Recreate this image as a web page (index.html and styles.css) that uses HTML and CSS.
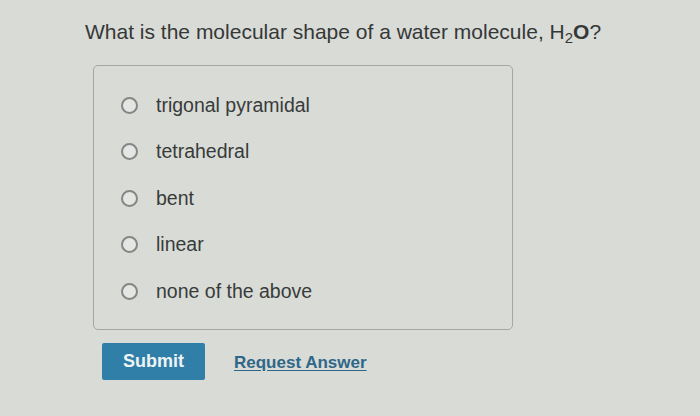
FILE: index.html
```html
<!DOCTYPE html>
<html>
<head>
<meta charset="utf-8">
<link rel="stylesheet" href="styles.css">
</head>
<body>
<div class="page">
  <h1 class="question">What is the molecular shape of a water molecule, H<sub class="sub">2</sub><b class="oxy">O</b>?</h1>
  <div class="choices">
    <label class="choice"><span class="radio"></span><span class="label">trigonal pyramidal</span></label>
    <label class="choice"><span class="radio"></span><span class="label">tetrahedral</span></label>
    <label class="choice"><span class="radio"></span><span class="label">bent</span></label>
    <label class="choice"><span class="radio"></span><span class="label">linear</span></label>
    <label class="choice"><span class="radio"></span><span class="label">none of the above</span></label>
  </div>
  <div class="actions">
    <button class="submit">Submit</button>
    <a class="request" href="#">Request Answer</a>
  </div>
</div>
</body>
</html>
```
FILE: styles.css
```css
html, body {
  margin: 0;
  padding: 0;
  background: #d9dbd7;
  height: 100%;
}
body {
  font-family: "Liberation Sans", Arial, sans-serif;
  color: #353837;
}
.page {
  padding: 19px 0 0 85px;
}
.question {
  margin: 0;
  font-size: 21px;
  font-weight: normal;
  line-height: 26px;
  color: #353837;
}
.sub {
  font-size: 15px;
  vertical-align: -4px;
  line-height: 0;
}
.oxy {
  font-weight: bold;
}
.choices {
  margin: 20px 0 0 8px;
  width: 420px;
  height: 265px;
  box-sizing: border-box;
  border: 1px solid #a3a6a3;
  border-radius: 5px;
  padding: 27px 0 0 27px;
  display: flex;
  flex-direction: column;
  gap: 22.5px;
}
.choice {
  display: flex;
  align-items: center;
  height: 24px;
  gap: 18px;
}
.radio {
  width: 13px;
  height: 13px;
  border: 2px solid #838785;
  border-radius: 50%;
  background: #e4e6e3;
  flex: none;
}
.label {
  font-size: 19.5px;
  color: #383b3a;
}
.actions {
  margin: 13px 0 0 17px;
  display: flex;
  align-items: center;
  gap: 29px;
}
.submit {
  width: 103px;
  height: 37px;
  border: none;
  border-radius: 2px;
  background: #2f7fa8;
  color: #eef3f5;
  font-family: "Liberation Sans", Arial, sans-serif;
  font-size: 18px;
  font-weight: bold;
  padding: 0;
}
.request {
  font-size: 17px;
  font-weight: bold;
  color: #2f6788;
  text-decoration: underline;
  text-underline-offset: 2px;
  margin-top: 2px;
}
```
